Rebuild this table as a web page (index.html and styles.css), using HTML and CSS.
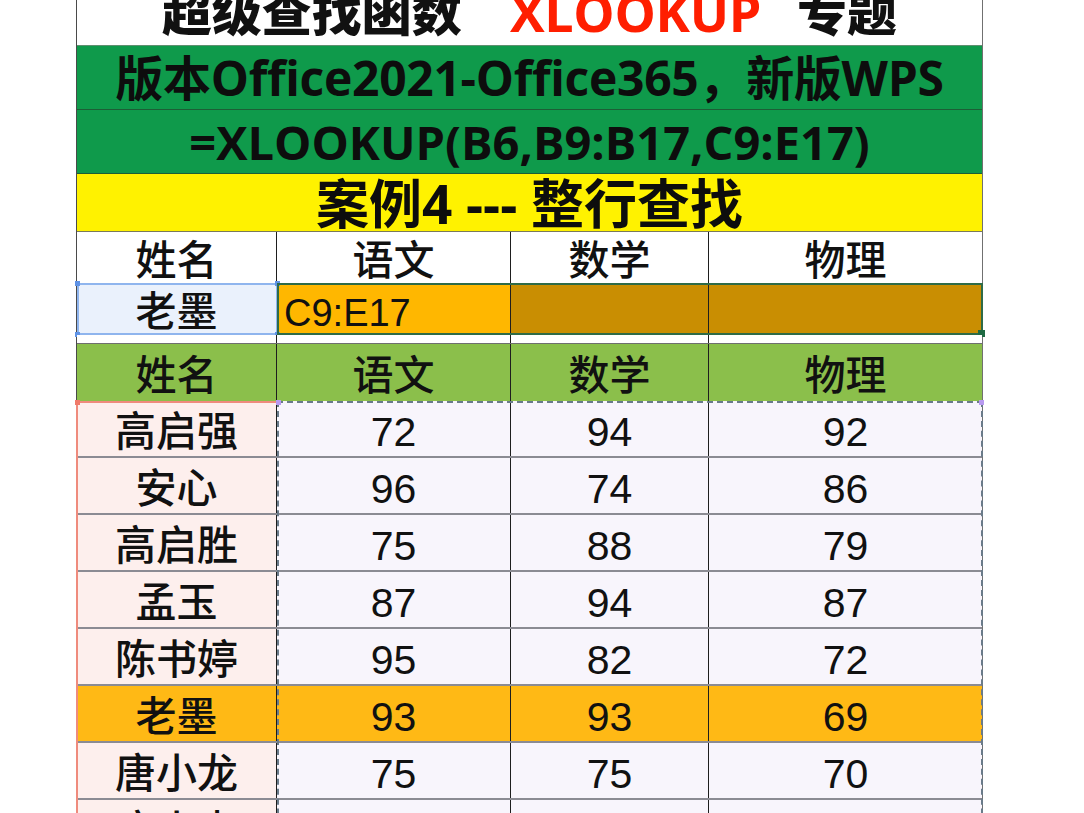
FILE: index.html
```html
<!DOCTYPE html>
<html lang="zh-CN">
<head>
<meta charset="utf-8">
<title>XLOOKUP 专题</title>
<link rel="stylesheet" href="styles.css">
</head>
<body>
<div class="sheet">
  <div class="title"><span class="t-cn">超级查找函数</span><span class="t-red">XLOOKUP</span><span class="t-cn2">专题</span></div>
  <div class="band green">版本Office2021-Office365，新版WPS</div>
  <div class="band green formula">=XLOOKUP(B6,B9:B17,C9:E17)</div>
  <div class="band yellow">案例4 --- 整行查找</div>

  <div class="grid head">
    <div class="cell">姓名</div><div class="cell">语文</div><div class="cell">数学</div><div class="cell">物理</div>
  </div>
  <div class="grid key">
    <div class="cell kb">老墨</div>
    <div class="cell kc">C9:E17</div>
    <div class="cell kd"></div>
    <div class="cell kd"></div>
    <div class="sel-blue"><i class="hb tl"></i><i class="hb tr"></i><i class="hb bl"></i><i class="hb br"></i></div>
    <div class="sel-green"><i class="hg"></i></div>
  </div>
  <div class="grid gap">
    <div class="cell"></div><div class="cell"></div><div class="cell"></div><div class="cell"></div>
  </div>
  <div class="grid head ghead">
    <div class="cell">姓名</div><div class="cell">语文</div><div class="cell">数学</div><div class="cell">物理</div>
  </div>

  <div class="data">
    <div class="grid drow"><div class="cell nm">高启强</div><div class="cell">72</div><div class="cell">94</div><div class="cell">92</div></div>
    <div class="grid drow"><div class="cell nm">安心</div><div class="cell">96</div><div class="cell">74</div><div class="cell">86</div></div>
    <div class="grid drow"><div class="cell nm">高启胜</div><div class="cell">75</div><div class="cell">88</div><div class="cell">79</div></div>
    <div class="grid drow"><div class="cell nm">孟玉</div><div class="cell">87</div><div class="cell">94</div><div class="cell">87</div></div>
    <div class="grid drow"><div class="cell nm">陈书婷</div><div class="cell">95</div><div class="cell">82</div><div class="cell">72</div></div>
    <div class="grid drow hit"><div class="cell nm">老墨</div><div class="cell">93</div><div class="cell">93</div><div class="cell">69</div></div>
    <div class="grid drow"><div class="cell nm">唐小龙</div><div class="cell">75</div><div class="cell">75</div><div class="cell">70</div></div>
    <div class="grid drow"><div class="cell nm">唐小虎</div><div class="cell">81</div><div class="cell">77</div><div class="cell">85</div></div>
    <div class="grid drow"><div class="cell nm">安欣</div><div class="cell">90</div><div class="cell">86</div><div class="cell">91</div></div>
    <div class="sel-b"><i class="hs"></i></div>
    <div class="sel-ce"><i class="hp l"></i><i class="hp r"></i></div>
  </div>
</div>
</body>
</html>
```
FILE: styles.css
```css
html, body {
  margin: 0;
  padding: 0;
  background: #ffffff;
  height: 813px;
  overflow: hidden;
}

.sheet {
  width: 905px;
  margin: -24px 0 0 76px;
  border-left: 1px solid #4a4a4a;
  border-right: 1px solid #707070;
  color: #111111;
  font-family: "Liberation Sans", "Noto Sans CJK SC", sans-serif;
}

.title {
  height: 70px;
  box-sizing: border-box;
  padding-top: 3px;
  border-bottom: 1px solid #5f8f70;
  display: flex;
  justify-content: center;
  align-items: center;
  font-family: "Open Sans", "Noto Sans CJK SC", sans-serif;
  font-weight: 900;
  font-size: 50px;
  line-height: 1;
  background: #ffffff;
}
.t-red {
  color: #ff1e00;
  font-weight: 700;
  font-size: 52px;
  margin: 0 36px 0 48px;
  letter-spacing: -0.3px;
}

.band {
  display: flex;
  justify-content: center;
  align-items: center;
  box-sizing: border-box;
  font-family: "Open Sans", "Noto Sans CJK SC", sans-serif;
  font-weight: 700;
  line-height: 1;
  color: #0d0d0d;
  overflow: hidden;
}
.green {
  height: 64px;
  background: #0f9a4b;
  border-bottom: 1px solid #1d5e36;
  font-size: 48px;
  letter-spacing: -0.3px;
}
.formula {
  font-size: 47px;
  letter-spacing: 0;
  padding-top: 2px;
}
.yellow {
  height: 58px;
  background: #fff200;
  border-bottom: 1px solid #7a7a5a;
  font-size: 53px;
  padding-top: 2px;
}

.grid {
  display: grid;
  grid-template-columns: 200px 234px 198px 273px;
  box-sizing: border-box;
  position: relative;
}
.cell {
  display: flex;
  justify-content: center;
  align-items: center;
  padding-top: 7px;
  box-sizing: border-box;
  border-right: 1px solid #1e1e1e;
  font-size: 41px;
  font-weight: 500;
  line-height: 1;
  min-width: 0;
}
.cell:nth-child(4) {
  border-right: none;
}

.head {
  height: 51px;
  background: #ffffff;
}
.key {
  height: 52px;
}
.kb {
  background: #eaf1fc;
}
.kc {
  background: #ffb700;
  justify-content: flex-start;
  padding-left: 7px;
  font-size: 38px;
}
.kd {
  background: #c98e02;
}
.gap {
  height: 9px;
  background: #ffffff;
  border-bottom: 1px solid #6f6f6f;
}
.gap .cell {
  padding: 0;
}
.ghead {
  height: 57px;
  background: #8bbf4b;
}

.data {
  position: relative;
}
.drow {
  height: 57px;
  border-bottom: 2px solid #8b8b93;
}
.drow .cell {
  background: #f8f5fc;
}
.drow .nm {
  background: #fdefed;
}
.drow.hit .cell {
  background: #ffb915;
}

/* selection overlays */
.sel-blue {
  position: absolute;
  left: 0;
  top: 0;
  width: 201px;
  height: 52px;
  box-sizing: border-box;
  border: 2px solid #8fb5ee;
  pointer-events: none;
}
.hb {
  position: absolute;
  width: 5px;
  height: 5px;
  background: #5f93e6;
}
.hb.tl { left: -4px; top: -4px; }
.hb.tr { right: -4px; top: -4px; }
.hb.bl { left: -4px; bottom: -4px; }
.hb.br { right: -4px; bottom: -4px; }

.sel-green {
  position: absolute;
  left: 200px;
  right: -1px;
  top: 0;
  height: 52px;
  box-sizing: border-box;
  border: 2px solid #2f6b47;
  pointer-events: none;
}
.hg {
  position: absolute;
  right: -4px;
  bottom: -4px;
  width: 7px;
  height: 7px;
  background: #1f6a43;
}

.sel-b {
  position: absolute;
  left: -1px;
  top: 0;
  width: 201px;
  bottom: 0;
  box-sizing: border-box;
  border-left: 2px solid #ef8b7d;
  border-top: 2px solid #ef8b7d;
  pointer-events: none;
}
.hs {
  position: absolute;
  left: -3px;
  top: -3px;
  width: 5px;
  height: 5px;
  background: #f07a6a;
}
.sel-ce {
  position: absolute;
  left: 200px;
  right: -1px;
  top: 0;
  bottom: 0;
  box-sizing: border-box;
  border: 2px dashed #6a7b8a;
  pointer-events: none;
}
.hp {
  position: absolute;
  top: -3px;
  width: 5px;
  height: 5px;
  background: #b89af0;
}
.hp.l { left: -3px; }
.hp.r { right: -3px; }
```
